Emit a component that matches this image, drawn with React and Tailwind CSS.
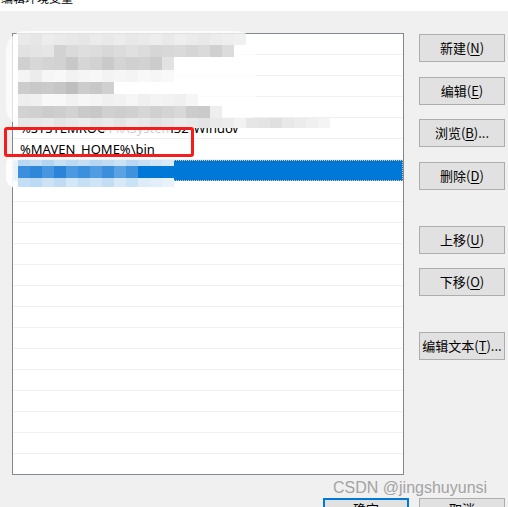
import React from "react";

const mosaicRows = [
  { top: "top-[34px]", h: "h-[11px]", cells: ["bg-[#e9e9e9]","bg-[#e6e6e6]","bg-[#ececec]","bg-[#eaeaea]","bg-[#e8e8e8]","bg-[#e6e6e6]","bg-[#ebebeb]","bg-[#e9e9e9]","bg-[#ececec]","bg-[#e8e8e8]","bg-[#eaeaea]","bg-[#ededed]","bg-[#e9e9e9]","bg-[#eeeeee]","bg-[#ebebeb]","bg-[#e8e8e8]","bg-[#ececec]","bg-[#eeeeee]","bg-[#f0f0f0]"] },
  { top: "top-[45px]", h: "h-[12px]", cells: ["bg-[#e2e2e2]","bg-[#e4e4e4]","bg-[#e6e6e6]","bg-[#d2d2d2]","bg-[#dadada]","bg-[#dedede]","bg-[#dcdcdc]","bg-[#d8d8d8]","bg-[#dcdcdc]","bg-[#e0e0e0]","bg-[#dcdcdc]","bg-[#d6d6d6]","bg-[#d8d8d8]","bg-[#dadada]","bg-[#d6d6d6]","bg-[#dadada]","bg-[#d0d0d0]","bg-[#dcdcdc]"] },
  { top: "top-[57px]", h: "h-[13px]", cells: ["bg-[#d0d0d0]","bg-[#d8d8d8]","bg-[#d4d4d4]","bg-[#d2d2d2]","bg-[#c8c8c8]","bg-[#d6d6d6]","bg-[#d2d2d2]","bg-[#cacaca]","bg-[#d4d4d4]","bg-[#d0d0d0]","bg-[#d2d2d2]","bg-[#cccccc]","bg-[#e2e2e2]"] },
  { top: "top-[70px]", h: "h-[12px]", cells: ["bg-[#f4f4f4]","bg-[#ececec]","bg-[#f6f6f6]","bg-[#f8f8f8]","bg-[#f2f2f2]","bg-[#f5f5f5]","bg-[#f7f7f7]","bg-[#f3f3f3]","bg-[#f6f6f6]","bg-[#f4f4f4]","bg-[#f8f8f8]","bg-[#f6f6f6]","bg-[#f9f9f9]"] },
  { top: "top-[82px]", h: "h-[12px]", cells: ["bg-[#cccccc]","bg-[#c8c8c8]","bg-[#cacaca]","bg-[#c6c6c6]","bg-[#bebebe]","bg-[#cccccc]","bg-[#c8c8c8]","bg-[#d0d0d0]"] },
  { top: "top-[94px]", h: "h-[12px]", cells: ["bg-[#eeeeee]","bg-[#f0f0f0]","bg-[#f8f8f8]","bg-[#f8f8f8]","bg-[#f2f2f2]","bg-[#f6f6f6]","bg-[#f4f4f4]","bg-[#f0f0f0]","bg-[#f2f2f2]","bg-[#f6f6f6]","bg-[#f0f0f0]","bg-[#f4f4f4]","bg-[#f2f2f2]","bg-[#f0f0f0]","bg-[#f6f6f6]"] },
  { top: "top-[106px]", h: "h-[12px]", cells: ["bg-[#d2d2d2]","bg-[#d0d0d0]","bg-[#cccccc]","bg-[#cecece]","bg-[#d2d2d2]","bg-[#cacaca]","bg-[#c8c8c8]","bg-[#d0d0d0]","bg-[#cecece]","bg-[#d0d0d0]","bg-[#d6d6d6]","bg-[#d0d0d0]","bg-[#d4d4d4]","bg-[#d8d8d8]","bg-[#cccccc]","bg-[#cacaca]","bg-[#eeeeee]"] },
  { top: "top-[118px]", h: "h-[10px]", cells: ["bg-[#e6e6e6]","bg-[#e8e8e8]","bg-[#eaeaea]","bg-[#e4e4e4]","bg-[#e8e8e8]","bg-[#ececec]","bg-[#e6e6e6]","bg-[#e9e9e9]","bg-[#e4e4e4]","bg-[#eaeaea]","bg-[#e8e8e8]","bg-[#e2e2e2]","bg-[#e6e6e6]","bg-[#ebebeb]","bg-[#e8e8e8]","bg-[#e4e4e4]","bg-[#e9e9e9]","bg-[#ececec]","bg-[#f2f2f2]","bg-[#e6e6e6]","bg-[#e4e4e4]","bg-[#e0e0e0]","bg-[#e8e8e8]","bg-[#ececec]","bg-[#f0f0f0]","bg-[#f4f4f4]"] },
];

const blueTop = ["bg-[#b8d8f3]","bg-[#c2ddf5]","bg-[#b4d5f2]","bg-[#c8e0f6]","bg-[#bcd9f3]","bg-[#c4def5]","bg-[#b6d6f2]","bg-[#c0dbf4]","bg-[#cae2f6]","bg-[#bad8f3]","bg-[#c6dff5]","bg-[#d0e6f8]","bg-[#d8eaf8]"];
const blueMid = ["bg-[#3c8ede]","bg-[#2f87d9]","bg-[#4696e0]","bg-[#2b84d8]","bg-[#4a99e1]","bg-[#3b8fdc]","bg-[#4f9ce2]","bg-[#3a8edc]","bg-[#5aa2e3]","bg-[#3f92dd]"];
const blueBot = ["bg-[#c4def5]","bg-[#bcdaf3]","bg-[#cce3f6]","bg-[#c0dcf4]","bg-[#d2e7f8]","bg-[#c6dff5]","bg-[#cfe5f7]","bg-[#c2ddf4]","bg-[#d6e9f8]","bg-[#cae2f6]","bg-[#dcecf9]","bg-[#e2effa]","bg-[#e8f2fb]"];

function Cells({ cells, h }) {
  return cells.map((c, i) => <div key={i} className={`w-[12px] ${h} ${c}`} />);
}

function Btn({ children, className = "" }) {
  return (
    <div className={`w-[86px] h-[28px] border border-[#adadad] bg-[#e1e1e1] flex items-center justify-center text-[13px] leading-[16px] text-black ${className}`}>
      {children}
    </div>
  );
}

const U = ({ children }) => <span className="underline underline-offset-2">{children}</span>;

export default function App() {
  const rows = Array.from({ length: 21 });
  return (
    <div className="relative w-[508px] h-[507px] overflow-hidden bg-[#f0f0f0] font-['Noto_Sans','Noto_Sans_CJK_SC',sans-serif]">
      {/* title bar */}
      <div className="h-[11px] bg-white overflow-hidden">
        <div className="-mt-[9px] pl-[1px] text-[12px] leading-[14px] text-black font-['Noto_Sans_CJK_SC',sans-serif]">编辑环境变量</div>
      </div>

      <div className="flex pl-[12px] pt-[22px] gap-[15px]">
        {/* list */}
        <div className="w-[392px] h-[442px] border border-[#828790] bg-white overflow-hidden flex flex-col">
          {rows.map((_, i) => {
            if (i === 6) {
              return (
                <div key={i} className="h-[21px] shrink-0 bg-[#0078d7] border border-dotted border-[#f3c48c]" />
              );
            }
            return (
              <div key={i} className="h-[21px] shrink-0 border-b border-[#f0f0f0] pl-[7px] text-[13px] leading-[20px] text-black whitespace-nowrap">
                {i === 4 ? "%SYSTEMROOT%\\System32\\WindowsPowerShell\\v1.0\\" : i === 5 ? "%MAVEN_HOME%\\bin" : ""}
              </div>
            );
          })}
        </div>

        {/* buttons */}
        <div className="flex flex-col pt-[1px] font-['Noto_Sans_CJK_SC',sans-serif]">
          <Btn>新建(<U>N</U>)</Btn>
          <Btn className="mt-[15px]">编辑(<U>E</U>)</Btn>
          <Btn className="mt-[14px]">浏览(<U>B</U>)...</Btn>
          <Btn className="mt-[15px]">删除(<U>D</U>)</Btn>
          <Btn className="mt-[36px]">上移(<U>U</U>)</Btn>
          <Btn className="mt-[14px]">下移(<U>O</U>)</Btn>
          <Btn className="mt-[36px]">编辑文本(<U>T</U>)...</Btn>
        </div>
      </div>

      {/* bottom buttons */}
      <div className="flex justify-end gap-[10px] pr-[3px] mt-[23px] font-['Noto_Sans_CJK_SC',sans-serif]">
        <div className="w-[86px] h-[28px] border-2 border-[#0078d7] bg-[#e1e1e1] flex justify-center pt-[1px] text-[13px] leading-[16px]">确定</div>
        <div className="w-[86px] h-[28px] border border-[#adadad] bg-[#e1e1e1] flex justify-center pt-[2px] text-[13px] leading-[16px]">取消</div>
      </div>

      {/* mosaic overlay (blurred content) */}
      <div className="absolute left-[6px] top-[31px] w-[250px] h-[96px] rounded-[20px] bg-white/75" />
      <div className="absolute left-[238px] top-[118px] w-[150px] h-[20px] rounded-r-[12px] bg-white" />
      <div className="absolute left-[104px] top-[127px] w-[66px] h-[9px] bg-white/80" />
      {mosaicRows.map((r, i) => (
        <div key={i} className={`absolute left-[18px] ${r.top} flex`}>
          <Cells cells={r.cells} h={r.h} />
        </div>
      ))}

      {/* selection mosaic */}
      <div className="absolute left-[6px] top-[154px] w-[14px] h-[34px] rounded-l-[10px] bg-white/90" />
      <div className="absolute left-[18px] top-[160px] flex">
        <Cells cells={blueTop} h="h-[6px]" />
      </div>
      <div className="absolute left-[18px] top-[166px] flex">
        <Cells cells={blueMid} h="h-[12px]" />
      </div>
      <div className="absolute left-[18px] top-[178px] flex">
        <Cells cells={blueBot} h="h-[9px]" />
      </div>

      {/* red highlight box */}
      <div className="absolute left-[4px] top-[127px] w-[190px] h-[30px] border-[3px] border-[#f41c1c] rounded-[3px]" />

      {/* watermark */}
      <div className="absolute left-[333px] top-[478px] text-[16px] leading-[20px] text-[#a3a3a3] font-['Liberation_Sans',Arial,sans-serif] whitespace-nowrap">
        CSDN @jingshuyunsi
      </div>
    </div>
  );
}
